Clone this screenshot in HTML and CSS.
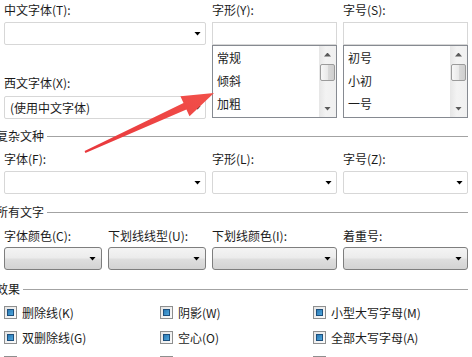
FILE: index.html
```html
<!DOCTYPE html>
<html lang="zh-CN">

<head>
    <meta charset="UTF-8">
    <title>字体</title>
    <link rel="stylesheet" href="styles.css">
</head>

<body>
    <div class="page">
        <div class="dialog">
            <!-- 中文 / 西文 font pickers -->
            <div class="grid">
                <div class="cell span2">
                    <div class="label">中文字体(T):</div>
                    <div class="combo flat"><span class="caret"></span></div>
                    <div class="label mid">西文字体(X):</div>
                    <div class="combo flat"><span class="value">(使用中文字体)</span><span class="caret"></span></div>
                </div>
                <div class="cell">
                    <div class="label">字形(Y):</div>
                    <div class="field"></div>
                    <div class="listbox">
                        <ul class="items">
                            <li>常规</li>
                            <li>倾斜</li>
                            <li>加粗</li>
                        </ul>
                        <div class="scrollbar">
                            <div class="sb-btn up"></div>
                            <div class="thumb"></div>
                            <div class="track"></div>
                            <div class="sb-btn down"></div>
                        </div>
                    </div>
                </div>
                <div class="cell">
                    <div class="label">字号(S):</div>
                    <div class="field"></div>
                    <div class="listbox">
                        <ul class="items">
                            <li>初号</li>
                            <li>小初</li>
                            <li>一号</li>
                        </ul>
                        <div class="scrollbar">
                            <div class="sb-btn up"></div>
                            <div class="thumb"></div>
                            <div class="track"></div>
                            <div class="sb-btn down"></div>
                        </div>
                    </div>
                </div>
            </div>

            <!-- 复杂文种 -->
            <div class="group-title first"><span>复杂文种</span></div>
            <div class="grid row">
                <div class="cell span2">
                    <div class="label">字体(F):</div>
                    <div class="combo flat"><span class="caret"></span></div>
                </div>
                <div class="cell">
                    <div class="label">字形(L):</div>
                    <div class="combo flat"><span class="caret"></span></div>
                </div>
                <div class="cell">
                    <div class="label">字号(Z):</div>
                    <div class="combo flat"><span class="caret"></span></div>
                </div>
            </div>

            <!-- 所有文字 -->
            <div class="group-title"><span>所有文字</span></div>
            <div class="grid row">
                <div class="cell">
                    <div class="label low">字体颜色(C):</div>
                    <div class="combo raised"><span class="caret"></span></div>
                </div>
                <div class="cell">
                    <div class="label low">下划线线型(U):</div>
                    <div class="combo raised"><span class="caret"></span></div>
                </div>
                <div class="cell">
                    <div class="label low">下划线颜色(I):</div>
                    <div class="combo raised"><span class="caret"></span></div>
                </div>
                <div class="cell">
                    <div class="label low">着重号:</div>
                    <div class="combo raised"><span class="caret"></span></div>
                </div>
            </div>

            <!-- 效果 -->
            <div class="group-title effects"><span>效果</span></div>
            <div class="checks">
                <label class="check"><span class="cb on"></span>删除线(K)</label>
                <label class="check"><span class="cb on"></span>阴影(W)</label>
                <label class="check"><span class="cb on"></span>小型大写字母(M)</label>
                <label class="check"><span class="cb on"></span>双删除线(G)</label>
                <label class="check"><span class="cb on"></span>空心(O)</label>
                <label class="check"><span class="cb on"></span>全部大写字母(A)</label>
                <label class="check"><span class="cb"></span>上标(P)</label>
                <label class="check"><span class="cb"></span>阳文(E)</label>
                <label class="check"><span class="cb"></span>隐藏文字(H)</label>
            </div>
        </div>

        <svg class="arrow" width="472" height="357" viewBox="0 0 472 357">
            <defs>
                <linearGradient id="arrowFill" x1="0" y1="1" x2="1" y2="0">
                    <stop offset="0" stop-color="#e8373c" />
                    <stop offset="1" stop-color="#f2504a" />
                </linearGradient>
            </defs>
            <polygon fill="url(#arrowFill)"
                points="84.6,151.1 183.5,103.1 180.4,96.3 214,93 189.5,116.3 186.4,109.5 85.4,152.9" />
        </svg>
    </div>
</body>

</html>
```

FILE: styles.css
```css
body {
    margin: 0;
    background: #fff;
    font-family: "Noto Sans CJK SC", "Noto Sans", sans-serif;
    font-size: 12px;
    color: #1b1b1b;
}

.page {
    position: relative;
    width: 472px;
    height: 357px;
    overflow: hidden;
}

.dialog {
    width: 464px;
    padding-left: 4px;
}

.grid {
    display: grid;
    grid-template-columns: 98px 98px 125px 125px;
    column-gap: 6px;
}

.span2 {
    grid-column: span 2;
}

.cell {
    display: flex;
    flex-direction: column;
}

/* Labels */
.label {
    height: 22px;
    line-height: 19px;
    white-space: nowrap;
}

.label.mid {
    margin-top: 28px;
    height: 23px;
    line-height: 20px;
}

.label.low {
    line-height: 22px;
}

/* Combo boxes */
.combo {
    height: 23px;
    box-sizing: border-box;
    display: flex;
    align-items: center;
    padding: 0 4px 0 5px;
}

.combo.flat {
    border: 1px solid #d7d7d7;
    border-radius: 2px;
    background: #fff;
}

.combo.raised {
    border: 1px solid #7e7e7e;
    border-radius: 3px;
    background: linear-gradient(to bottom, #f4f4f4 0%, #ececec 45%, #dedede 55%, #d3d3d3 100%);
    padding-right: 5px;
}

.combo .value {
    flex: 1;
}

.caret {
    margin-left: auto;
    width: 7px;
    height: 4px;
    background: #000;
    clip-path: polygon(0 0, 100% 0, 50% 100%);
}

/* Style / size pickers */
.field {
    height: 23px;
    box-sizing: border-box;
    border: 1px solid #d7d7d7;
}

.listbox {
    height: 73px;
    box-sizing: border-box;
    border: 1px solid #868a91;
    display: flex;
}

.items {
    list-style: none;
    margin: 0;
    padding: 0 0 0 4px;
    flex: 1;
}

.items li {
    height: 23px;
    line-height: 23px;
}

.scrollbar {
    width: 17px;
    display: flex;
    flex-direction: column;
    background: linear-gradient(to right, #e6e6e6, #f3f3f3 40%, #f0f0f0);
}

.sb-btn {
    height: 17px;
    display: flex;
    align-items: center;
    justify-content: center;
}

.sb-btn::before {
    content: "";
    width: 7px;
    height: 4px;
    background: #5a5a5a;
}

.sb-btn.up::before {
    clip-path: polygon(50% 0, 100% 100%, 0 100%);
}

.sb-btn.down::before {
    clip-path: polygon(0 0, 100% 0, 50% 100%);
}

.thumb {
    height: 17px;
    margin: 1px 1px 0;
    box-sizing: border-box;
    border: 1px solid #9b9b9b;
    border-radius: 2px;
    background: linear-gradient(to right, #f7f7f7, #e9e9e9 50%, #d9d9d9 51%, #cfcfcf);
}

.track {
    flex: 1;
}

/* Group headers */
.group-title {
    display: flex;
    align-items: center;
    height: 16px;
    line-height: 16px;
    margin-left: -8px;
    margin-top: 10px;
    white-space: nowrap;
}

.group-title.first {
    margin-top: 9px;
}

.group-title.effects {
    margin-top: 11px;
}

.group-title::after {
    content: "";
    flex: 1;
    height: 1px;
    margin-left: 3px;
    background: #a3a3a3;
}

.row {
    margin-top: 5px;
}

/* Effects */
.checks {
    display: grid;
    grid-template-columns: 156px 153px 1fr;
    grid-auto-rows: 25px;
    margin-top: 3px;
}

.check {
    display: flex;
    align-items: center;
    gap: 5px;
    white-space: nowrap;
}

.cb {
    width: 13px;
    height: 13px;
    box-sizing: border-box;
    border: 1px solid #8e8f8f;
    background: linear-gradient(135deg, #e4e4e4, #fbfbfb);
    padding: 2px;
}

.cb.on::before {
    content: "";
    display: block;
    width: 7px;
    height: 7px;
    box-sizing: border-box;
    border: 1px solid #1d4f7c;
    background: linear-gradient(135deg, #2a7ab5, #4fa6dc);
}

/* Overlay */
.arrow {
    position: absolute;
    left: 0;
    top: 0;
    pointer-events: none;
}
```
